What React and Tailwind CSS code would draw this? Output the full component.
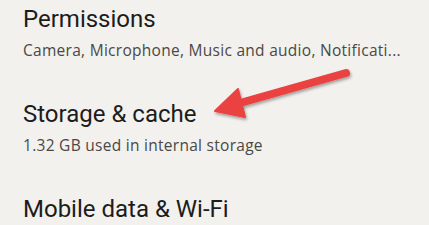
import React from 'react';

const rows = [
  { title: 'Permissions', sub: 'Camera, Microphone, Music and audio, Notificati...' },
  { title: 'Storage & cache', sub: '1.32 GB used in internal storage' },
  { title: 'Mobile data & Wi-Fi', sub: '' },
];

const Arrow = () => (
  <svg
    className="absolute left-0 top-0 pointer-events-none"
    width="429"
    height="225"
    viewBox="0 0 429 225"
  >
    <defs>
      <filter id="sh" x="-20%" y="-40%" width="140%" height="180%">
        <feDropShadow dx="1" dy="2" stdDeviation="1.8" floodColor="#000" floodOpacity="0.35" />
      </filter>
    </defs>
    <g filter="url(#sh)" fill="#ea4340" stroke="#ea4340">
      <line x1="346" y1="73" x2="240" y2="103" strokeWidth="8" strokeLinecap="round" />
      <polygon points="215,111 238,89 245,117" strokeWidth="2" strokeLinejoin="round" />
    </g>
  </svg>
);

export default function App() {
  return (
    <div
      className="relative w-[429px] h-[225px] overflow-hidden bg-[#f2f1ee] pl-[23px] pt-[3px]"
      style={{ fontFamily: 'Roboto, "Noto Sans", sans-serif' }}
    >
      <div className="flex flex-col gap-[38px]">
        {rows.map((r) => (
          <div key={r.title} className="flex flex-col">
            <div className="text-[24px] leading-[32px] text-[#1d1c1b] whitespace-nowrap">{r.title}</div>
            {r.sub && (
              <div className="mt-[5px] text-[15.5px] leading-[20px] tracking-[0.28px] text-[#4a4846] whitespace-nowrap font-['Open_Sans',sans-serif]">
                {r.sub}
              </div>
            )}
          </div>
        ))}
      </div>
      <Arrow />
    </div>
  );
}
